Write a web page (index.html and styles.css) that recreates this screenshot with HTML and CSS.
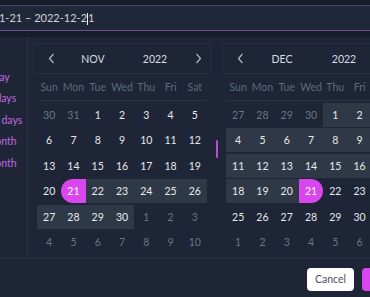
FILE: index.html
```html
<!DOCTYPE html>
<html lang="en">
<head>
  <meta charset="UTF-8">
  <title>Date range picker</title>
  <link rel="stylesheet" href="styles.css">
</head>
<body>
  <div class="top-strip"></div>
  <div class="range-input">
    <span class="range-text">2022-11-21 – 2022-12-2<span class="caret"></span>1</span>
  </div>
  <div class="gap-strip"></div>

  <div class="picker">
    <div class="picker-body">
      <ul class="presets">
        <li>Today</li>
        <li>Yesterday</li>
        <li>Last 7 days</li>
        <li>Last 30 days</li>
        <li>This month</li>
        <li>Last month</li>
      </ul>

      <div class="calendar">
        <div class="cal-head">
          <span class="nav"><svg width="7" height="11" viewBox="0 0 7 11"><polyline points="5.5,1 1.5,5.5 5.5,10" /></svg></span>
          <span class="month">NOV</span>
          <span class="year">2022</span>
          <span class="nav nav-next"><svg width="7" height="11" viewBox="0 0 7 11"><polyline points="1.5,1 5.5,5.5 1.5,10" /></svg></span>
        </div>
        <div class="weekdays">
          <span>Sun</span><span>Mon</span><span>Tue</span><span>Wed</span><span>Thu</span><span>Fri</span><span>Sat</span>
        </div>
        <div class="days">
          <span class="muted">30</span><span class="muted">31</span><span>1</span><span>2</span><span>3</span><span>4</span><span>5</span>
          <span>6</span><span>7</span><span>8</span><span>9</span><span>10</span><span>11</span><span>12</span>
          <span>13</span><span>14</span><span>15</span><span>16</span><span>17</span><span>18</span><span>19</span>
          <span>20</span><span class="start">21</span><span class="range">22</span><span class="range">23</span><span class="range">24</span><span class="range">25</span><span class="range">26</span>
          <span class="range">27</span><span class="range">28</span><span class="range">29</span><span class="range">30</span><span class="muted">1</span><span class="muted">2</span><span class="muted">3</span>
          <span class="muted">4</span><span class="muted">5</span><span class="muted">6</span><span class="muted">7</span><span class="muted">8</span><span class="muted">9</span><span class="muted">10</span>
        </div>
      </div>

      <div class="divider"><span class="thumb"></span></div>

      <div class="calendar">
        <div class="cal-head">
          <span class="nav"><svg width="7" height="11" viewBox="0 0 7 11"><polyline points="5.5,1 1.5,5.5 5.5,10" /></svg></span>
          <span class="month">DEC</span>
          <span class="year">2022</span>
          <span class="nav nav-next"><svg width="7" height="11" viewBox="0 0 7 11"><polyline points="1.5,1 5.5,5.5 1.5,10" /></svg></span>
        </div>
        <div class="weekdays">
          <span>Sun</span><span>Mon</span><span>Tue</span><span>Wed</span><span>Thu</span><span>Fri</span><span>Sat</span>
        </div>
        <div class="days">
          <span class="muted">27</span><span class="muted">28</span><span class="muted">29</span><span class="muted">30</span><span class="range">1</span><span class="range">2</span><span class="range">3</span>
          <span class="range">4</span><span class="range">5</span><span class="range">6</span><span class="range">7</span><span class="range">8</span><span class="range">9</span><span class="range">10</span>
          <span class="range">11</span><span class="range">12</span><span class="range">13</span><span class="range">14</span><span class="range">15</span><span class="range">16</span><span class="range">17</span>
          <span class="range">18</span><span class="range">19</span><span class="range">20</span><span class="end">21</span><span>22</span><span>23</span><span>24</span>
          <span>25</span><span>26</span><span>27</span><span>28</span><span>29</span><span>30</span><span>31</span>
          <span class="muted">1</span><span class="muted">2</span><span class="muted">3</span><span class="muted">4</span><span class="muted">5</span><span class="muted">6</span><span class="muted">7</span>
        </div>
      </div>
    </div>

    <div class="picker-footer">
      <button class="btn btn-cancel">Cancel</button>
      <button class="btn btn-ok">OK</button>
    </div>
  </div>
</body>
</html>
```

FILE: styles.css
```css
body {
  margin: 0;
  width: 370px;
  height: 297px;
  overflow: hidden;
  background-color: #1d2536;
  font-family: 'Lato', 'Open Sans', sans-serif;
  color: #e6e8ec;
}

.top-strip {
  height: 5px;
  background-color: #171d2b;
}

.range-input {
  height: 24px;
  border-top: 1px solid #4a4366;
  border-bottom: 1px solid #6a4e8c;
  background-color: #1f2839;
  display: flex;
  align-items: center;
  overflow: hidden;
}

.range-text {
  margin-left: -37px;
  font-size: 11px;
  color: #cfd3db;
  white-space: nowrap;
}

.caret {
  display: inline-block;
  width: 1px;
  height: 12px;
  background-color: #f2f2f2;
  vertical-align: middle;
}

.gap-strip {
  height: 6px;
  background-color: #161c29;
}

.picker {
  display: flex;
  flex-direction: column;
  background-color: #1d2536;
}

.picker-body {
  display: flex;
  height: 221px;
}

.presets {
  list-style: none;
  margin: 0 0 0 -35px;
  padding: 8px 0 0 0;
  width: 62px;
  flex-shrink: 0;
  border-right: 1px solid #2a3344;
  font-size: 10.5px;
  color: #c06ae0;
}

.presets li {
  height: 21.6px;
  line-height: 21.6px;
  white-space: nowrap;
}

.calendar {
  width: 178px;
  flex-shrink: 0;
  padding-top: 6px;
  margin-left: 5px;
}

.divider + .calendar {
  margin-left: 0;
}

.cal-head {
  height: 29px;
  border: 1px solid #283143;
  border-radius: 2px;
  display: grid;
  grid-template-columns: 34px 50px 74px 1fr;
  align-items: center;
  font-size: 10.5px;
  color: #d8dbe1;
}

.cal-head .nav {
  display: flex;
  justify-content: center;
}

.cal-head .nav-next {
  justify-content: flex-start;
  padding-left: 3px;
}

.cal-head svg {
  fill: none;
  stroke: #b3b8c2;
  stroke-width: 1.2;
}

.cal-head .month,
.cal-head .year {
  text-align: center;
}

.weekdays {
  margin: 0 4px;
  height: 26px;
  display: grid;
  grid-template-columns: repeat(7, 1fr);
  align-items: center;
  border-bottom: 1px solid #2a3344;
  font-size: 10.5px;
  color: #5f6a7b;
  text-align: center;
}

.days {
  margin: 2px 4px 0;
  display: grid;
  grid-template-columns: repeat(7, 1fr);
  grid-auto-rows: 24px;
  row-gap: 1.4px;
  font-size: 10.5px;
  text-align: center;
}

.days span {
  line-height: 24px;
}

.days .muted {
  color: #6a7587;
}

.days .range {
  background-color: #2e3847;
}

.days .start,
.days .end {
  background-color: #d946ef;
  color: #fff;
}

.days .start {
  border-radius: 12px 0 0 12px;
}

.days .end {
  border-radius: 0 12px 12px 0;
}

.divider {
  width: 11px;
  flex-shrink: 0;
  display: flex;
  justify-content: center;
  padding-top: 103px;
  box-sizing: border-box;
}

.thumb {
  width: 2px;
  height: 18px;
  border-radius: 1px;
  background-color: #b54fd8;
}

.picker-footer {
  border-top: 1px solid #2a3344;
  height: 40px;
  display: flex;
  align-items: center;
  justify-content: flex-end;
  gap: 8px;
  margin-right: -32px;
}

.btn {
  height: 23px;
  border: none;
  border-radius: 4px;
  font-family: 'Lato', 'Open Sans', sans-serif;
  font-size: 10.5px;
  padding: 0;
}

.btn-cancel {
  width: 47px;
  background-color: #ffffff;
  color: #4b5160;
}

.btn-ok {
  width: 40px;
  background-color: #d946ef;
  color: #fff;
}
```
